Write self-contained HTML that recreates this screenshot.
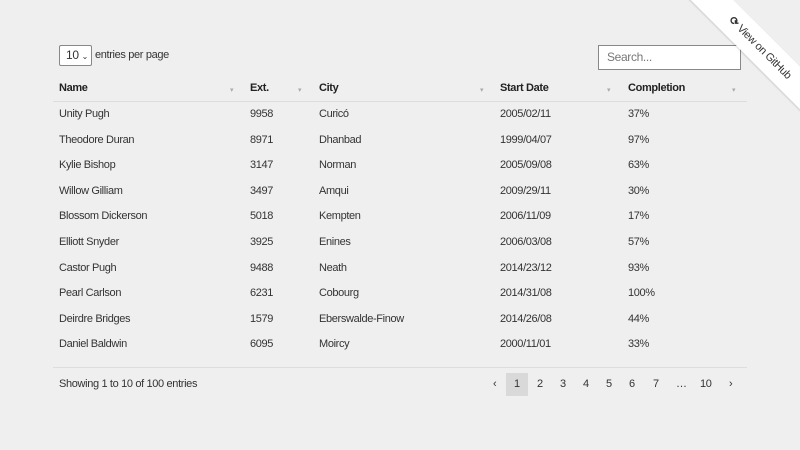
<!DOCTYPE html>
<html><head><meta charset="utf-8"><style>
body{margin:0;width:800px;height:450px;background:#efefef;font-family:"Liberation Sans",Roboto,sans-serif;font-size:11px;letter-spacing:-0.35px;color:#333;position:relative;overflow:hidden}
.a{position:absolute;white-space:nowrap}
.sel{left:59px;top:45px;width:33px;height:21px;border:1px solid #888;background:#fff;border-radius:2px;box-sizing:border-box;font-size:12px;line-height:19px;padding-left:6px}
.search{left:598px;top:45px;width:143px;height:25px;border:1px solid #888;background:#fff;box-sizing:border-box;color:#777;font-size:12px;line-height:23px;padding-left:8px}
.h{font-weight:bold;color:#222;top:82px}
.arr{color:#aaa;font-size:7px;top:86px}
.line{position:absolute;left:53px;width:694px;height:1px;background:#ddd}
.pg{top:378px}
.ribbon{position:absolute;left:655px;top:33px;width:210px;height:30px;background:#fff;transform:rotate(45deg);transform-origin:center;text-align:center;line-height:30px;font-size:11px;color:#333;box-shadow:0 1px 2px rgba(0,0,0,.15)}
</style></head><body>
<div class="a sel">10 <span style="font-size:8px">&#8964;</span></div>
<div class="a" style="left:95px;top:49px">entries per page</div>
<div class="a search">Search...</div>
<div class="a h" style="left:59px">Name</div><div class="a arr" style="left:230px">▾</div>
<div class="a h" style="left:250px">Ext.</div><div class="a arr" style="left:298px">▾</div>
<div class="a h" style="left:319px">City</div><div class="a arr" style="left:480px">▾</div>
<div class="a h" style="left:500px">Start Date</div><div class="a arr" style="left:607px">▾</div>
<div class="a h" style="left:628px">Completion</div><div class="a arr" style="left:732px">▾</div>
<div class="line" style="top:101px"></div>
<div class="line" style="top:367px"></div>
<div id="rows"></div>
<script>
var d=[["Unity Pugh","9958","Curicó","2005/02/11","37%"],["Theodore Duran","8971","Dhanbad","1999/04/07","97%"],["Kylie Bishop","3147","Norman","2005/09/08","63%"],["Willow Gilliam","3497","Amqui","2009/29/11","30%"],["Blossom Dickerson","5018","Kempten","2006/11/09","17%"],["Elliott Snyder","3925","Enines","2006/03/08","57%"],["Castor Pugh","9488","Neath","2014/23/12","93%"],["Pearl Carlson","6231","Cobourg","2014/31/08","100%"],["Deirdre Bridges","1579","Eberswalde-Finow","2014/26/08","44%"],["Daniel Baldwin","6095","Moircy","2000/11/01","33%"]];
var x=[59,250,319,500,628],h="";
d.forEach(function(r,i){r.forEach(function(c,j){h+='<div class="a" style="left:'+x[j]+'px;top:'+(108+i*25.6)+'px">'+c+'</div>'})});
document.getElementById('rows').innerHTML=h;
</script>
<div class="a" style="left:59px;top:378px">Showing 1 to 10 of 100 entries</div>
<div class="a" style="left:506px;top:373px;width:22px;height:23px;background:#d9d9d9"></div>
<div class="a pg" style="left:493px">‹</div>
<div class="a pg" style="left:514px">1</div>
<div class="a pg" style="left:537px">2</div>
<div class="a pg" style="left:560px">3</div>
<div class="a pg" style="left:583px">4</div>
<div class="a pg" style="left:606px">5</div>
<div class="a pg" style="left:629px">6</div>
<div class="a pg" style="left:653px">7</div>
<div class="a pg" style="left:676px">…</div>
<div class="a pg" style="left:700px">10</div>
<div class="a pg" style="left:729px">›</div>
<div class="ribbon"><span style="font-weight:bold">&#10227;</span> View on GitHub</div>
</body></html>
